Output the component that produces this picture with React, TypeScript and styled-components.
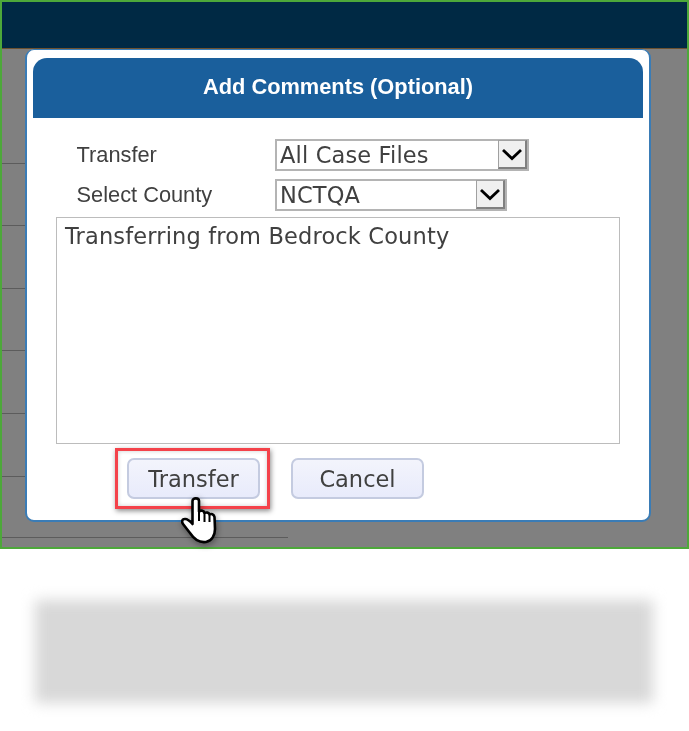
import styled, { createGlobalStyle } from "styled-components";

const GlobalStyle = createGlobalStyle`
    html, body {
        margin: 0;
        padding: 0;
        background: #fff;
    }
    * {
        box-sizing: border-box;
    }
`;

const Page = styled.div`
    width: 689px;
    height: 731px;
    overflow: hidden;
    filter: blur(0.55px);
`;

const Frame = styled.div`
    width: 689px;
    height: 549px;
    border: 2px solid #4da83a;
    display: flex;
    flex-direction: column;
`;

const TopBar = styled.div`
    height: 47px;
    flex: none;
    background: #002944;
    border-bottom: 1px solid #6e5230;
`;

const Backdrop = styled.div`
    flex: 1;
    padding-left: 23px;
    background-color: #808080;
    background-image:
        repeating-linear-gradient(to bottom, transparent 0, transparent 61.6px, #5c5c5c 61.6px, #5c5c5c 62.6px),
        linear-gradient(#5c5c5c, #5c5c5c);
    background-repeat: no-repeat;
    background-size: 23px 430px, 286px 1px;
    background-position: 0 52px, 0 488px;
`;

const Dialog = styled.div`
    width: 626px;
    height: 473px;
    background: #fff;
    border: 2px solid #3a7cb6;
    border-top-width: 1px;
    border-radius: 9px;
    padding: 8px 6px 0;
`;

const Header = styled.div`
    height: 60px;
    background: #1a5f9c;
    border-radius: 14px 14px 0 0;
    display: flex;
    align-items: center;
    justify-content: center;
    font-family: "Liberation Sans", Arial, sans-serif;
    font-size: 21.8px;
    font-weight: 700;
    color: #fff;
    padding-bottom: 2px;
`;

const Form = styled.div`
    display: flex;
    flex-direction: column;
    padding-top: 21px;
`;

const Row = styled.div`
    display: flex;
    align-items: center;
    height: 32px;
    margin-bottom: 8px;
    padding-left: 43.5px;
`;

const Label = styled.div`
    width: 198.5px;
    font-family: "Liberation Sans", Arial, sans-serif;
    font-size: 21.8px;
    color: #404040;
`;

const SelectBox = styled.div<{ $width: number }>`
    width: ${(p) => p.$width}px;
    height: 32px;
    border: 2px solid #b4b4b4;
    display: flex;
    align-items: center;
    justify-content: space-between;
    background: #fff;
`;

const SelectValue = styled.span`
    font-family: "DejaVu Sans", Verdana, sans-serif;
    font-size: 22.5px;
    letter-spacing: 0.15px;
    color: #404040;
    padding-left: 3px;
`;

const ArrowButton = styled.div`
    width: 29px;
    height: 29px;
    margin-bottom: 1px;
    background: #f0f0f0;
    border: 1px solid #a0a0a0;
    border-right-width: 2px;
    border-bottom-width: 2px;
    border-bottom-color: #808080;
    border-right-color: #808080;
    display: flex;
    align-items: center;
    justify-content: center;
`;

const CommentBox = styled.div`
    width: 564px;
    height: 227px;
    margin-top: -2px;
    margin-left: 23px;
    border: 1.5px solid #bcbcbc;
    padding: 5px 8px;
    font-family: "DejaVu Sans", Verdana, sans-serif;
    font-size: 22.5px;
    letter-spacing: 0.15px;
    color: #404040;
`;

const ButtonRow = styled.div`
    display: flex;
    gap: 31px;
    margin-top: 14px;
    margin-left: 94px;
`;

const ButtonWrap = styled.div`
    position: relative;
`;

const ActionButton = styled.div`
    width: 133px;
    height: 41px;
    border: 2px solid #c4cbe0;
    border-radius: 7px;
    background: linear-gradient(#f3f4fc, #e8ebfb);
    display: flex;
    align-items: center;
    justify-content: center;
    font-family: "DejaVu Sans", Verdana, sans-serif;
    font-size: 22.5px;
    color: #404040;
`;

const Highlight = styled.div`
    position: absolute;
    top: -10px;
    left: -12px;
    width: 155px;
    height: 61px;
    border: 3px solid #f4424a;
    box-shadow: 1px 2px 5px rgba(0, 0, 0, 0.45), inset 0 0 4px rgba(0, 0, 0, 0.2);
`;

const Cursor = styled.svg`
    position: absolute;
    top: 39px;
    left: 54px;
    filter: drop-shadow(1px 2px 3px rgba(0, 0, 0, 0.4));
`;

const Placeholder = styled.div`
    width: 618px;
    height: 103px;
    margin-top: 51px;
    margin-left: 35px;
    background: #d8d8d8;
    filter: blur(7px);
`;

function Chevron() {
    return (
        <svg width="22" height="13" viewBox="0 0 22 13">
            <path d="M2 2 L11 10.5 L20 2" fill="none" stroke="#000" strokeWidth="2.8" />
        </svg>
    );
}

function HandCursor() {
    return (
        <Cursor width="36" height="47" viewBox="0 0 36 47">
            <path
                d="M11.5 4C11.5 .5 18 .5 18 4L18 14.5C20 13 23 13.5 23.5 16C25 15 28 15.5 28.5 17.5C30 16.5 33 17 33.5 20L34 32C34 38 31 44 25 45C18 46 13 42 9 36L2 27C.5 25 1 22 3.5 22C6 21.5 9 24 11.5 27Z"
                fill="#fff"
                stroke="#000"
                strokeWidth="2.6"
                strokeLinejoin="round"
            />
            <path d="M18 14.5V24M23.5 16V25M28.5 17.5V25" fill="none" stroke="#000" strokeWidth="2" />
        </Cursor>
    );
}

export default function App() {
    return (
        <Page>
            <GlobalStyle />
            <Frame>
                <TopBar />
                <Backdrop>
                    <Dialog>
                        <Header>Add Comments (Optional)</Header>
                        <Form>
                            <Row>
                                <Label>Transfer</Label>
                                <SelectBox $width={254}>
                                    <SelectValue>All Case Files</SelectValue>
                                    <ArrowButton>
                                        <Chevron />
                                    </ArrowButton>
                                </SelectBox>
                            </Row>
                            <Row>
                                <Label>Select County</Label>
                                <SelectBox $width={232}>
                                    <SelectValue>NCTQA</SelectValue>
                                    <ArrowButton>
                                        <Chevron />
                                    </ArrowButton>
                                </SelectBox>
                            </Row>
                            <CommentBox>Transferring from Bedrock County</CommentBox>
                            <ButtonRow>
                                <ButtonWrap>
                                    <ActionButton>Transfer</ActionButton>
                                    <Highlight />
                                    <HandCursor />
                                </ButtonWrap>
                                <ButtonWrap>
                                    <ActionButton>Cancel</ActionButton>
                                </ButtonWrap>
                            </ButtonRow>
                        </Form>
                    </Dialog>
                </Backdrop>
            </Frame>
            <Placeholder />
        </Page>
    );
}
